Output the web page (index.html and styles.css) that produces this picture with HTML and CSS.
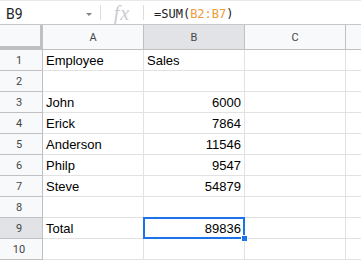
FILE: index.html
```html
<!DOCTYPE html>
<html>
<head>
<meta charset="utf-8">
<link rel="stylesheet" href="styles.css">
</head>
<body>
<div class="app">
  <div class="fbar">
    <div class="namebox"><span class="ref">B9</span><span class="caret"></span></div>
    <div class="sep"></div>
    <div class="fx">fx</div>
    <div class="sep"></div>
    <div class="formula">=SUM(<span class="rng">B2:B7</span>)</div>
  </div>
  <div class="grid">
    <div class="corner"></div>
    <div class="ch">A</div>
    <div class="ch sel">B</div>
    <div class="ch">C</div>
    <div class="ch"></div>

    <div class="rh">1</div><div class="c">Employee</div><div class="c">Sales</div><div class="c"></div><div class="c"></div>
    <div class="rh">2</div><div class="c"></div><div class="c"></div><div class="c"></div><div class="c"></div>
    <div class="rh">3</div><div class="c">John</div><div class="c n">6000</div><div class="c"></div><div class="c"></div>
    <div class="rh">4</div><div class="c">Erick</div><div class="c n">7864</div><div class="c"></div><div class="c"></div>
    <div class="rh">5</div><div class="c">Anderson</div><div class="c n">11546</div><div class="c"></div><div class="c"></div>
    <div class="rh">6</div><div class="c">Philp</div><div class="c n">9547</div><div class="c"></div><div class="c"></div>
    <div class="rh">7</div><div class="c">Steve</div><div class="c n">54879</div><div class="c"></div><div class="c"></div>
    <div class="rh">8</div><div class="c"></div><div class="c"></div><div class="c"></div><div class="c"></div>
    <div class="rh sel">9</div><div class="c">Total</div><div class="c n active">89836<span class="handle"></span></div><div class="c"></div><div class="c"></div>
    <div class="rh">10</div><div class="c"></div><div class="c"></div><div class="c"></div><div class="c"></div>
  </div>
</div>
</body>
</html>
```
FILE: styles.css
```css
* { box-sizing: border-box; }
html, body { margin: 0; padding: 0; background: #fff; }
body { width: 361px; height: 260px; overflow: hidden; font-family: "Liberation Sans", Arial, sans-serif; }
.app { width: 361px; height: 260px; overflow: hidden; }

.fbar {
  height: 25px;
  display: flex;
  align-items: center;
  padding-top: 2px;
  border-top: 1px solid #e8eaed;
  border-bottom: 1px solid #c7c7c7;
}
.namebox {
  width: 100px;
  display: flex;
  align-items: center;
  padding-left: 6px;
  padding-right: 8px;
}
.ref { font-family: Roboto, "Liberation Sans", sans-serif; font-size: 14px; color: #202124; flex: 1; }
.caret {
  width: 0; height: 0;
  border-left: 3.5px solid transparent;
  border-right: 3.5px solid transparent;
  border-top: 3.5px solid #80868b;
  margin-top: 1px;
}
.sep { width: 1px; height: 15px; background: #dadce0; margin-top: -2px; }
.fx {
  width: 42px;
  text-align: center;
  font-family: "Liberation Serif", serif;
  font-style: italic;
  font-size: 20px;
  color: #c8cbcf;
  line-height: 20px;
  letter-spacing: 1px;
  margin-top: -2px;
}
.formula {
  padding-left: 10px;
  font-family: "DejaVu Sans Mono", monospace;
  font-size: 12px;
  color: #202124;
}
.rng { color: #f09a37; }

.grid {
  display: grid;
  grid-template-columns: 43px 101px 101px 101px 101px;
  grid-template-rows: 25px repeat(10, 21px);
}
.corner {
  background: #f8f9fa;
  border-right: 4px solid #c0c0c0;
  border-bottom: 4px solid #c0c0c0;
  margin-right: -1px;
}
.ch {
  background: #f8f9fa;
  border-right: 1px solid #c0c0c0;
  border-bottom: 1px solid #c0c0c0;
  display: flex; align-items: center; justify-content: center;
  font-family: Roboto, "Liberation Sans", sans-serif;
  font-size: 11px;
  color: #444746;
}
.rh {
  background: #f8f9fa;
  border-right: 1px solid #c0c0c0;
  border-bottom: 1px solid #c0c0c0;
  display: flex; align-items: center; justify-content: center;
  padding-right: 4px;
  font-family: Roboto, "Liberation Sans", sans-serif;
  font-size: 11px;
  color: #444746;
}
.sel { background: #e1e3e6; }
.c {
  border-right: 1px solid #e2e2e2;
  border-bottom: 1px solid #e2e2e2;
  font-size: 13px;
  color: #000;
  padding: 0 3px;
  line-height: 21px;
  white-space: nowrap;
  position: relative;
}
.n { text-align: right; }
.active::after {
  content: "";
  position: absolute;
  top: -1px; left: -1px; right: -1px; bottom: -1px;
  border: 2px solid #1a73e8;
}
.handle {
  position: absolute;
  right: -4px; bottom: -4px;
  width: 7px; height: 7px;
  background: #1a73e8;
  border: 1px solid #fff;
  z-index: 2;
}
```
